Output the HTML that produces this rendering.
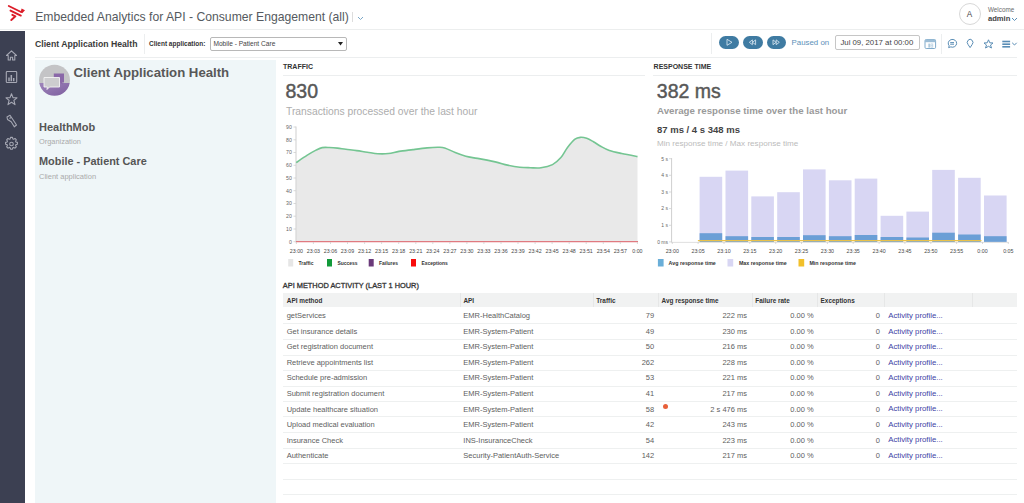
<!DOCTYPE html>
<html><head><meta charset="utf-8">
<style>
*{margin:0;padding:0;box-sizing:border-box}
html,body{width:1024px;height:503px;overflow:hidden;background:#fff;font-family:"Liberation Sans",sans-serif;color:#333}
.a{position:absolute;white-space:nowrap}
#hdr{position:absolute;left:0;top:0;width:1024px;height:30px;border-bottom:1px solid #eceeee}
#side{position:absolute;left:0;top:30.5px;width:24.8px;height:473px;background:#3c4052}
#tb{position:absolute;left:25px;top:31px;width:999px;height:27px}
.hl{position:absolute;height:1px;background:#eceeef}
.vl{position:absolute;width:1px;background:#eceeef}
#lp{position:absolute;left:35px;top:60px;width:241px;height:443px;background:#eff6f8}
.btn{position:absolute;top:36px;width:19.5px;height:12.7px;border-radius:7px;background:#3f7ba2}
.th{position:absolute;top:293px;height:14px;background:#f1f2f2}
.row{position:absolute;left:283px;width:734px;height:1px;background:#eef0f0}
.tm{font-size:7.5px;color:#5e5e5e}
.hd{font-size:6.4px;font-weight:700;color:#333}
</style></head><body>
<!-- header -->
<div id="hdr"></div>
<svg class="a" style="left:4px;top:2px" width="24" height="22" viewBox="4 2 24 22">
  <g stroke="#dc1c28" stroke-width="1.9" fill="none" stroke-linecap="round" stroke-linejoin="round">
    <path d="M8.8 6 L21 12"/>
    <path d="M10.5 10.6 L20.8 15.6"/>
    <path d="M12.3 14.8 L15.4 16.3 L11.3 20"/>
  </g>
  <path d="M21.6 8.4 L25 10.3 L22.2 13.2 L20.6 12 Z" fill="#dc1c28"/>
</svg>
<div class="a" style="left:35.2px;top:10px;font-size:12.2px;color:#555a60">Embedded Analytics for API - Consumer Engagement (all)</div>
<div class="vl" style="left:352px;top:12.3px;height:9.8px;background:#ddd"></div>
<svg class="a" style="left:357px;top:15.8px" width="7" height="5" viewBox="0 0 7 5"><path d="M1 1 L3.5 3.5 L6 1" stroke="#7aa6c6" stroke-width="1" fill="none"/></svg>
<div class="a" style="left:958.5px;top:3.3px;width:22px;height:22px;border:1px solid #d8d8d8;border-radius:50%"></div>
<div class="a" style="left:965px;top:10px;font-size:8.2px;color:#444;width:9px;text-align:center">A</div>
<div class="a" style="left:988px;top:5.8px;font-size:6.3px;color:#6a6a6a">Welcome</div>
<div class="a" style="left:988px;top:14px;font-size:7.6px;font-weight:700;color:#444">admin</div>
<svg class="a" style="left:1011px;top:16.5px" width="7" height="5" viewBox="0 0 7 5"><path d="M1 1 L3.5 3.5 L6 1" stroke="#5b8fb8" stroke-width="1" fill="none"/></svg>

<!-- sidebar -->
<div id="side"></div>
<svg class="a" style="left:0;top:30px" width="25" height="130" viewBox="0 30 25 130">
  <g stroke="#a6a8b4" stroke-width="1.1" fill="none" stroke-linejoin="round">
    <!-- home -->
    <path d="M6.5 55.5 L11.5 50.8 L16.5 55.5 L14.8 55.5 L14.8 60 L12.6 60 L12.6 57.3 L10.4 57.3 L10.4 60 L8.2 60 L8.2 55.5 Z"/>
    <!-- chart -->
    <rect x="6.3" y="71.5" width="10.4" height="11" rx="0.8"/>
    <path d="M9 81.2 V77.5 M11.3 81.2 V75 M13.7 81.2 V78" stroke-width="1.5"/>
    <!-- star -->
    <path d="M11.5 93.8 L13 97.6 L17 97.8 L13.9 100.4 L15 104.6 L11.5 102.3 L8 104.6 L9.1 100.4 L6 97.8 L10 97.6 Z"/>
    <!-- flashlight -->
    <path d="M7 117 L10 115.2 L13.2 120 L16.5 125 L14.3 126.8 L11.2 121.8 L7.5 119.5 Z"/>
    <path d="M9.5 118.5 L11 117.5"/>
    <!-- gear -->
    <circle cx="11.5" cy="144" r="1.8"/>
    <path d="M15.90 141.95 L17.43 142.36 L17.43 144.24 L15.90 144.65 L15.57 145.45 L16.35 146.83 L15.03 148.15 L13.65 147.37 L12.85 147.70 L12.44 149.23 L10.56 149.23 L10.15 147.70 L9.35 147.37 L7.97 148.15 L6.65 146.83 L7.43 145.45 L7.10 144.65 L5.57 144.24 L5.57 142.36 L7.10 141.95 L7.43 141.15 L6.65 139.77 L7.97 138.45 L9.35 139.23 L10.15 138.90 L10.56 137.37 L12.44 137.37 L12.85 138.90 L13.65 139.23 L15.03 138.45 L16.35 139.77 L15.57 141.15 Z"/>
  </g>
</svg>

<!-- toolbar -->
<div class="a" style="left:35px;top:39px;font-size:8.7px;font-weight:700;color:#3a3a3a">Client Application Health</div>
<div class="vl" style="left:144px;top:34px;height:20px"></div>
<div class="a" style="left:149px;top:40.3px;font-size:6.5px;font-weight:700;color:#333">Client application:</div>
<div class="a" style="left:209.5px;top:37.2px;width:137px;height:13.8px;border:1px solid #b8b8b8;border-radius:2px;background:#fff"></div>
<div class="a" style="left:213.4px;top:40.2px;font-size:6.6px;color:#444">Mobile - Patient Care</div>
<svg class="a" style="left:338px;top:42px" width="5" height="4" viewBox="0 0 5 4"><path d="M0 0 H5 L2.5 3.5 Z" fill="#222"/></svg>

<div class="vl" style="left:711px;top:33px;height:21px"></div>
<div class="btn" style="left:719px"></div>
<div class="btn" style="left:743px"></div>
<div class="btn" style="left:766.5px"></div>
<svg class="a" style="left:719px;top:36px" width="68" height="13" viewBox="719 36 68 13">
  <g stroke="#cfe0ec" stroke-width="0.9" fill="none" stroke-linejoin="round">
    <path d="M727 39.3 L732 42.3 L727 45.3 Z"/>
    <path d="M752.4 39.9 L749.3 42.3 L752.4 44.7 Z M755.6 39.9 L752.5 42.3 L755.6 44.7 Z"/>
    <path d="M773 39.9 L776.1 42.3 L773 44.7 Z M776.2 39.9 L779.3 42.3 L776.2 44.7 Z"/>
  </g>
</svg>
<div class="a" style="left:791.5px;top:37.8px;font-size:7.9px;color:#5d91b9">Paused on</div>
<div class="a" style="left:835.3px;top:35.2px;width:84.6px;height:14.4px;border:1px solid #c6c6c6;border-radius:2px"></div>
<div class="a" style="left:840.4px;top:38px;font-size:7.8px;color:#444">Jul 09, 2017 at 00:00</div>
<svg class="a" style="left:923px;top:37px" width="15" height="14" viewBox="923 37 15 14">
  <rect x="925" y="39.6" width="10.6" height="8.9" rx="1.2" fill="none" stroke="#80abcb" stroke-width="1"/>
  <rect x="925" y="39.6" width="10.6" height="2.6" fill="#9cbdd6"/>
  <path d="M929.1 43.6 V47.6" stroke="#7ba6c7" stroke-width="1"/>
  <path d="M930.9 43.8 V47.4 M932.7 43.8 V47.4" stroke="#a9c6dc" stroke-width="0.7"/>
  <path d="M930.9 43.8 H932.7 M930.9 45.6 H932.7 M930.9 47.4 H932.7" stroke="#a9c6dc" stroke-width="0.5"/>
</svg>
<div class="vl" style="left:940.6px;top:34px;height:20px"></div>
<svg class="a" style="left:945px;top:37px" width="76" height="13" viewBox="945 37 76 13">
  <g stroke="#5a8db5" stroke-width="1" fill="none" stroke-linejoin="round">
    <path d="M948.6 47.6 L949.2 45.8 A4.2 3.9 0 1 1 950.8 46.9 Z"/>
    <path d="M950.2 42.6 H954 M950.2 44.2 H954"/>
    <path d="M970.1 47.6 L968.1 44.6 A2.8 3.1 0 1 1 972.1 44.6 Z"/>
    <path d="M988.5 39.8 L989.8 42.8 L993 43 L990.5 45 L991.5 48 L988.5 46.3 L985.5 48 L986.5 45 L984 43 L987.2 42.8 Z"/>
    <path d="M1012.2 42.8 L1014.5 45 L1016.7 42.8"/>
  </g>
  <g fill="#5a8db5">
    <rect x="1002.3" y="40.7" width="7.8" height="1.6"/>
    <rect x="1002.3" y="43.4" width="7.8" height="1.6"/>
    <rect x="1002.3" y="46" width="7.8" height="1.6"/>
  </g>
</svg>
<div class="hl" style="left:35px;top:56.5px;width:982px"></div>

<!-- left panel -->
<div id="lp"></div>
<svg class="a" style="left:38px;top:64px" width="34" height="33" viewBox="38 64 34 33">
  <defs>
    <clipPath id="cc"><circle cx="54.5" cy="80.3" r="15.5"/></clipPath>
    <linearGradient id="pg" x1="0" y1="0" x2="1" y2="1"><stop offset="0" stop-color="#9f86bb"/><stop offset="1" stop-color="#7a5a9c"/></linearGradient>
  </defs>
  <g clip-path="url(#cc)">
    <rect x="38" y="64" width="34" height="19" fill="#c4c4c6"/>
    <rect x="38" y="83" width="34" height="14" fill="url(#pg)"/>
  </g>
  <path d="M53.8 73.6 H64 V82.5 L62.3 82.5 L62.8 84.8 L59.8 82.5 H53.8 Z" fill="#8a68a8"/>
  <path d="M44 77.5 H59.5 V87 H49.5 L47 89.5 L47.3 87 H44 Z" fill="#cdcdcf" stroke="#f4f4f4" stroke-width="0.9"/>
</svg>
<div class="a" style="left:73.6px;top:64.5px;font-size:13.2px;font-weight:700;color:#585858">Client Application Health</div>
<div class="a" style="left:39px;top:121px;font-size:11px;font-weight:700;color:#555">HealthMob</div>
<div class="a" style="left:39px;top:136.7px;font-size:7.4px;color:#aaa">Organization</div>
<div class="a" style="left:39px;top:155.4px;font-size:10.9px;font-weight:700;color:#555">Mobile - Patient Care</div>
<div class="a" style="left:39px;top:171.8px;font-size:7.5px;color:#aaa">Client application</div>

<!-- traffic -->
<div class="a" style="left:283px;top:63.4px;font-size:7px;font-weight:700;color:#333">TRAFFIC</div>
<div class="hl" style="left:283px;top:74.5px;width:362px"></div>
<div class="a" style="left:285.5px;top:80px;font-size:19.5px;color:#585858;-webkit-text-stroke:0.45px #585858">830</div>
<div class="a" style="left:286px;top:105.5px;font-size:10.3px;color:#adadad">Transactions processed over the last hour</div>
<!--TCHART--><svg class="a" style="left:275px;top:115px" width="375" height="160" viewBox="275 115 375 160">
<path d="M296.2 162.6 C298.0 161.4 303.6 157.5 306.9 155.4 C310.2 153.3 313.4 151.4 316.0 150.1 C318.6 148.8 320.0 148.0 322.2 147.6 C324.4 147.2 326.6 147.4 329.2 147.5 C331.8 147.6 334.7 147.8 337.5 148.1 C340.3 148.4 342.7 148.9 345.9 149.3 C349.1 149.7 353.2 150.1 356.8 150.6 C360.4 151.1 363.8 151.7 367.3 152.2 C370.8 152.7 374.4 153.5 377.9 153.7 C381.4 153.9 384.9 153.9 388.4 153.5 C391.9 153.1 394.9 152.1 399.0 151.4 C403.1 150.8 408.3 150.2 413.0 149.6 C417.7 149.0 423.0 148.3 427.1 147.9 C431.2 147.5 434.8 147.3 437.7 147.3 C440.6 147.3 441.8 147.0 444.7 147.9 C447.6 148.8 451.7 151.2 455.2 152.6 C458.7 154.0 462.1 155.3 465.8 156.3 C469.5 157.3 472.7 157.5 477.6 158.4 C482.5 159.3 490.2 160.8 495.2 161.9 C500.2 163.0 503.4 164.2 507.5 165.1 C511.6 166.0 516.0 166.8 519.8 167.2 C523.6 167.6 526.8 167.6 530.3 167.7 C533.8 167.8 537.2 168.3 540.9 167.8 C544.6 167.3 549.2 166.3 552.5 164.6 C555.8 162.9 558.4 160.3 560.9 157.5 C563.4 154.7 565.1 150.6 567.5 147.5 C569.9 144.4 572.8 140.9 575.0 139.2 C577.2 137.5 578.9 137.5 580.9 137.3 C582.9 137.2 584.6 137.6 586.7 138.3 C588.8 139.0 591.1 140.4 593.4 141.7 C595.7 143.0 597.9 144.7 600.6 146.2 C603.3 147.7 605.9 149.3 609.4 150.5 C612.9 151.7 617.0 152.5 621.7 153.5 C626.4 154.5 634.9 156.1 637.5 156.6 L637.5 241.7 L296.2 241.7 Z" fill="#e9e9e9"/>
<path d="M296 126.5 V242.5" stroke="#cfcfcf" stroke-width="1"/>
<path d="M293.5 241.7 H296" stroke="#cfcfcf" stroke-width="0.8"/>
<text x="291.8" y="243.5" font-size="5.2" fill="#666" text-anchor="end">0</text>
<path d="M293.5 229.0 H296" stroke="#cfcfcf" stroke-width="0.8"/>
<text x="291.8" y="230.8" font-size="5.2" fill="#666" text-anchor="end">10</text>
<path d="M293.5 216.2 H296" stroke="#cfcfcf" stroke-width="0.8"/>
<text x="291.8" y="218.0" font-size="5.2" fill="#666" text-anchor="end">20</text>
<path d="M293.5 203.5 H296" stroke="#cfcfcf" stroke-width="0.8"/>
<text x="291.8" y="205.3" font-size="5.2" fill="#666" text-anchor="end">30</text>
<path d="M293.5 190.7 H296" stroke="#cfcfcf" stroke-width="0.8"/>
<text x="291.8" y="192.5" font-size="5.2" fill="#666" text-anchor="end">40</text>
<path d="M293.5 178.0 H296" stroke="#cfcfcf" stroke-width="0.8"/>
<text x="291.8" y="179.8" font-size="5.2" fill="#666" text-anchor="end">50</text>
<path d="M293.5 165.3 H296" stroke="#cfcfcf" stroke-width="0.8"/>
<text x="291.8" y="167.1" font-size="5.2" fill="#666" text-anchor="end">60</text>
<path d="M293.5 152.5 H296" stroke="#cfcfcf" stroke-width="0.8"/>
<text x="291.8" y="154.3" font-size="5.2" fill="#666" text-anchor="end">70</text>
<path d="M293.5 139.8 H296" stroke="#cfcfcf" stroke-width="0.8"/>
<text x="291.8" y="141.6" font-size="5.2" fill="#666" text-anchor="end">80</text>
<path d="M293.5 127.0 H296" stroke="#cfcfcf" stroke-width="0.8"/>
<text x="291.8" y="128.8" font-size="5.2" fill="#666" text-anchor="end">90</text>
<path d="M296 241.6 H638" stroke="#e07a80" stroke-width="1.3"/>
<path d="M296.2 162.6 C298.0 161.4 303.6 157.5 306.9 155.4 C310.2 153.3 313.4 151.4 316.0 150.1 C318.6 148.8 320.0 148.0 322.2 147.6 C324.4 147.2 326.6 147.4 329.2 147.5 C331.8 147.6 334.7 147.8 337.5 148.1 C340.3 148.4 342.7 148.9 345.9 149.3 C349.1 149.7 353.2 150.1 356.8 150.6 C360.4 151.1 363.8 151.7 367.3 152.2 C370.8 152.7 374.4 153.5 377.9 153.7 C381.4 153.9 384.9 153.9 388.4 153.5 C391.9 153.1 394.9 152.1 399.0 151.4 C403.1 150.8 408.3 150.2 413.0 149.6 C417.7 149.0 423.0 148.3 427.1 147.9 C431.2 147.5 434.8 147.3 437.7 147.3 C440.6 147.3 441.8 147.0 444.7 147.9 C447.6 148.8 451.7 151.2 455.2 152.6 C458.7 154.0 462.1 155.3 465.8 156.3 C469.5 157.3 472.7 157.5 477.6 158.4 C482.5 159.3 490.2 160.8 495.2 161.9 C500.2 163.0 503.4 164.2 507.5 165.1 C511.6 166.0 516.0 166.8 519.8 167.2 C523.6 167.6 526.8 167.6 530.3 167.7 C533.8 167.8 537.2 168.3 540.9 167.8 C544.6 167.3 549.2 166.3 552.5 164.6 C555.8 162.9 558.4 160.3 560.9 157.5 C563.4 154.7 565.1 150.6 567.5 147.5 C569.9 144.4 572.8 140.9 575.0 139.2 C577.2 137.5 578.9 137.5 580.9 137.3 C582.9 137.2 584.6 137.6 586.7 138.3 C588.8 139.0 591.1 140.4 593.4 141.7 C595.7 143.0 597.9 144.7 600.6 146.2 C603.3 147.7 605.9 149.3 609.4 150.5 C612.9 151.7 617.0 152.5 621.7 153.5 C626.4 154.5 634.9 156.1 637.5 156.6" fill="none" stroke="#74c592" stroke-width="1.6"/>
<path d="M296.4 242 V244" stroke="#cfcfcf" stroke-width="0.8"/>
<text x="296.4" y="253.4" font-size="5.3" fill="#484848" text-anchor="middle">23:00</text>
<path d="M313.4 242 V244" stroke="#cfcfcf" stroke-width="0.8"/>
<text x="313.4" y="253.4" font-size="5.3" fill="#484848" text-anchor="middle">23:03</text>
<path d="M330.5 242 V244" stroke="#cfcfcf" stroke-width="0.8"/>
<text x="330.5" y="253.4" font-size="5.3" fill="#484848" text-anchor="middle">23:06</text>
<path d="M347.5 242 V244" stroke="#cfcfcf" stroke-width="0.8"/>
<text x="347.5" y="253.4" font-size="5.3" fill="#484848" text-anchor="middle">23:09</text>
<path d="M364.6 242 V244" stroke="#cfcfcf" stroke-width="0.8"/>
<text x="364.6" y="253.4" font-size="5.3" fill="#484848" text-anchor="middle">23:12</text>
<path d="M381.6 242 V244" stroke="#cfcfcf" stroke-width="0.8"/>
<text x="381.6" y="253.4" font-size="5.3" fill="#484848" text-anchor="middle">23:15</text>
<path d="M398.7 242 V244" stroke="#cfcfcf" stroke-width="0.8"/>
<text x="398.7" y="253.4" font-size="5.3" fill="#484848" text-anchor="middle">23:18</text>
<path d="M415.8 242 V244" stroke="#cfcfcf" stroke-width="0.8"/>
<text x="415.8" y="253.4" font-size="5.3" fill="#484848" text-anchor="middle">23:21</text>
<path d="M432.8 242 V244" stroke="#cfcfcf" stroke-width="0.8"/>
<text x="432.8" y="253.4" font-size="5.3" fill="#484848" text-anchor="middle">23:24</text>
<path d="M449.9 242 V244" stroke="#cfcfcf" stroke-width="0.8"/>
<text x="449.9" y="253.4" font-size="5.3" fill="#484848" text-anchor="middle">23:27</text>
<path d="M466.9 242 V244" stroke="#cfcfcf" stroke-width="0.8"/>
<text x="466.9" y="253.4" font-size="5.3" fill="#484848" text-anchor="middle">23:30</text>
<path d="M483.9 242 V244" stroke="#cfcfcf" stroke-width="0.8"/>
<text x="483.9" y="253.4" font-size="5.3" fill="#484848" text-anchor="middle">23:33</text>
<path d="M501.0 242 V244" stroke="#cfcfcf" stroke-width="0.8"/>
<text x="501.0" y="253.4" font-size="5.3" fill="#484848" text-anchor="middle">23:36</text>
<path d="M518.0 242 V244" stroke="#cfcfcf" stroke-width="0.8"/>
<text x="518.0" y="253.4" font-size="5.3" fill="#484848" text-anchor="middle">23:39</text>
<path d="M535.1 242 V244" stroke="#cfcfcf" stroke-width="0.8"/>
<text x="535.1" y="253.4" font-size="5.3" fill="#484848" text-anchor="middle">23:42</text>
<path d="M552.1 242 V244" stroke="#cfcfcf" stroke-width="0.8"/>
<text x="552.1" y="253.4" font-size="5.3" fill="#484848" text-anchor="middle">23:45</text>
<path d="M569.2 242 V244" stroke="#cfcfcf" stroke-width="0.8"/>
<text x="569.2" y="253.4" font-size="5.3" fill="#484848" text-anchor="middle">23:48</text>
<path d="M586.2 242 V244" stroke="#cfcfcf" stroke-width="0.8"/>
<text x="586.2" y="253.4" font-size="5.3" fill="#484848" text-anchor="middle">23:51</text>
<path d="M603.3 242 V244" stroke="#cfcfcf" stroke-width="0.8"/>
<text x="603.3" y="253.4" font-size="5.3" fill="#484848" text-anchor="middle">23:54</text>
<path d="M620.3 242 V244" stroke="#cfcfcf" stroke-width="0.8"/>
<text x="620.3" y="253.4" font-size="5.3" fill="#484848" text-anchor="middle">23:57</text>
<path d="M637.4 242 V244" stroke="#cfcfcf" stroke-width="0.8"/>
<text x="637.4" y="253.4" font-size="5.3" fill="#484848" text-anchor="middle">0:00</text>
<rect x="288.2" y="259" width="5" height="7.5" fill="#e6e6e6"/>
<text x="298.6" y="264.6" font-size="4.95" font-weight="700" fill="#333">Traffic</text>
<rect x="327" y="259" width="5" height="7.5" fill="#129a3a"/>
<text x="337.4" y="264.6" font-size="4.95" font-weight="700" fill="#333">Success</text>
<rect x="368.7" y="259" width="5" height="7.5" fill="#6a3a7a"/>
<text x="379" y="264.6" font-size="4.95" font-weight="700" fill="#333">Failures</text>
<rect x="411" y="259" width="5" height="7.5" fill="#f80c0c"/>
<text x="421.5" y="264.6" font-size="4.95" font-weight="700" fill="#333">Exceptions</text>
</svg><!--/TCHART-->

<!-- response -->
<div class="a" style="left:653.6px;top:63.4px;font-size:7px;font-weight:700;color:#333">RESPONSE TIME</div>
<div class="hl" style="left:653px;top:74.5px;width:364px"></div>
<div class="a" style="left:656.8px;top:79.5px;font-size:19.5px;color:#585858;-webkit-text-stroke:0.45px #585858">382 ms</div>
<div class="a" style="left:657px;top:105px;font-size:9.7px;font-weight:700;color:#9a9a9a">Average response time over the last hour</div>
<div class="a" style="left:657px;top:123.5px;font-size:9.5px;font-weight:700;color:#444">87 ms / 4 s 348 ms</div>
<div class="a" style="left:657px;top:138.8px;font-size:8.1px;color:#bbb">Min response time / Max response time</div>
<!--RCHART--><svg class="a" style="left:645px;top:150px" width="379" height="125" viewBox="645 150 379 125">
<path d="M671.6 158 V242.5" stroke="#cfcfcf" stroke-width="1"/>
<path d="M669 241.9 H671.6" stroke="#cfcfcf" stroke-width="0.8"/>
<text x="668" y="243.7" font-size="5" fill="#666" text-anchor="end">0 ms</text>
<path d="M669 225.3 H671.6" stroke="#cfcfcf" stroke-width="0.8"/>
<text x="668" y="227.1" font-size="5" fill="#666" text-anchor="end">1 s</text>
<path d="M669 208.6 H671.6" stroke="#cfcfcf" stroke-width="0.8"/>
<text x="668" y="210.4" font-size="5" fill="#666" text-anchor="end">2 s</text>
<path d="M669 192.0 H671.6" stroke="#cfcfcf" stroke-width="0.8"/>
<text x="668" y="193.8" font-size="5" fill="#666" text-anchor="end">3 s</text>
<path d="M669 175.3 H671.6" stroke="#cfcfcf" stroke-width="0.8"/>
<text x="668" y="177.1" font-size="5" fill="#666" text-anchor="end">4 s</text>
<path d="M669 158.7 H671.6" stroke="#cfcfcf" stroke-width="0.8"/>
<text x="668" y="160.5" font-size="5" fill="#666" text-anchor="end">5 s</text>
<rect x="699.6" y="176.8" width="22.6" height="65.1" fill="#d8d6f3"/>
<rect x="699.6" y="233.2" width="22.6" height="8.7" fill="#6b9fd6"/>
<rect x="725.5" y="170.6" width="22.6" height="71.3" fill="#d8d6f3"/>
<rect x="725.5" y="236.2" width="22.6" height="5.7" fill="#6b9fd6"/>
<rect x="751.3" y="196.4" width="22.6" height="45.5" fill="#d8d6f3"/>
<rect x="751.3" y="237" width="22.6" height="4.9" fill="#6b9fd6"/>
<rect x="777.2" y="192.2" width="22.6" height="49.7" fill="#d8d6f3"/>
<rect x="777.2" y="237" width="22.6" height="4.9" fill="#6b9fd6"/>
<rect x="803.0" y="169.4" width="22.6" height="72.5" fill="#d8d6f3"/>
<rect x="803.0" y="235.2" width="22.6" height="6.7" fill="#6b9fd6"/>
<rect x="828.9" y="180.3" width="22.6" height="61.6" fill="#d8d6f3"/>
<rect x="828.9" y="236.2" width="22.6" height="5.7" fill="#6b9fd6"/>
<rect x="854.7" y="178.6" width="22.6" height="63.3" fill="#d8d6f3"/>
<rect x="854.7" y="235" width="22.6" height="6.9" fill="#6b9fd6"/>
<rect x="880.6" y="215.8" width="22.6" height="26.1" fill="#d8d6f3"/>
<rect x="880.6" y="237" width="22.6" height="4.9" fill="#6b9fd6"/>
<rect x="906.4" y="211.6" width="22.6" height="30.3" fill="#d8d6f3"/>
<rect x="906.4" y="237.5" width="22.6" height="4.4" fill="#6b9fd6"/>
<rect x="932.2" y="169.9" width="22.6" height="72.0" fill="#d8d6f3"/>
<rect x="932.2" y="232.7" width="22.6" height="9.2" fill="#6b9fd6"/>
<rect x="958.1" y="177.8" width="22.6" height="64.1" fill="#d8d6f3"/>
<rect x="958.1" y="234.5" width="22.6" height="7.4" fill="#6b9fd6"/>
<rect x="984.0" y="195.5" width="22.6" height="46.4" fill="#d8d6f3"/>
<rect x="984.0" y="236.2" width="22.6" height="5.7" fill="#6b9fd6"/>
<path d="M671.6 242.4 H1008.4" stroke="#d8d8d8" stroke-width="0.8"/>
<path d="M697.9 240.7 H981.5" stroke="#e9c24a" stroke-width="1.2"/>
<path d="M672.3 242 V244" stroke="#cfcfcf" stroke-width="0.8"/>
<text x="672.3" y="253.2" font-size="5.3" fill="#484848" text-anchor="middle">23:00</text>
<path d="M698.1 242 V244" stroke="#cfcfcf" stroke-width="0.8"/>
<text x="698.1" y="253.2" font-size="5.3" fill="#484848" text-anchor="middle">23:05</text>
<path d="M724.0 242 V244" stroke="#cfcfcf" stroke-width="0.8"/>
<text x="724.0" y="253.2" font-size="5.3" fill="#484848" text-anchor="middle">23:10</text>
<path d="M749.8 242 V244" stroke="#cfcfcf" stroke-width="0.8"/>
<text x="749.8" y="253.2" font-size="5.3" fill="#484848" text-anchor="middle">23:15</text>
<path d="M775.7 242 V244" stroke="#cfcfcf" stroke-width="0.8"/>
<text x="775.7" y="253.2" font-size="5.3" fill="#484848" text-anchor="middle">23:20</text>
<path d="M801.5 242 V244" stroke="#cfcfcf" stroke-width="0.8"/>
<text x="801.5" y="253.2" font-size="5.3" fill="#484848" text-anchor="middle">23:25</text>
<path d="M827.4 242 V244" stroke="#cfcfcf" stroke-width="0.8"/>
<text x="827.4" y="253.2" font-size="5.3" fill="#484848" text-anchor="middle">23:30</text>
<path d="M853.2 242 V244" stroke="#cfcfcf" stroke-width="0.8"/>
<text x="853.2" y="253.2" font-size="5.3" fill="#484848" text-anchor="middle">23:35</text>
<path d="M879.1 242 V244" stroke="#cfcfcf" stroke-width="0.8"/>
<text x="879.1" y="253.2" font-size="5.3" fill="#484848" text-anchor="middle">23:40</text>
<path d="M904.9 242 V244" stroke="#cfcfcf" stroke-width="0.8"/>
<text x="904.9" y="253.2" font-size="5.3" fill="#484848" text-anchor="middle">23:45</text>
<path d="M930.8 242 V244" stroke="#cfcfcf" stroke-width="0.8"/>
<text x="930.8" y="253.2" font-size="5.3" fill="#484848" text-anchor="middle">23:50</text>
<path d="M956.6 242 V244" stroke="#cfcfcf" stroke-width="0.8"/>
<text x="956.6" y="253.2" font-size="5.3" fill="#484848" text-anchor="middle">23:55</text>
<path d="M982.5 242 V244" stroke="#cfcfcf" stroke-width="0.8"/>
<text x="982.5" y="253.2" font-size="5.3" fill="#484848" text-anchor="middle">0:00</text>
<path d="M1008.3 242 V244" stroke="#cfcfcf" stroke-width="0.8"/>
<text x="1008.3" y="253.2" font-size="5.3" fill="#484848" text-anchor="middle">0:05</text>
<rect x="657.9" y="259" width="5.7" height="7.5" fill="#6aaed8"/>
<text x="668.6" y="264.8" font-size="5.3" font-weight="700" fill="#333">Avg response time</text>
<rect x="727.5" y="259" width="5.7" height="7.5" fill="#d8d6f3"/>
<text x="738.9" y="264.8" font-size="5.3" font-weight="700" fill="#333">Max response time</text>
<rect x="798.5" y="259" width="5.7" height="7.5" fill="#f2c02a"/>
<text x="809.4" y="264.8" font-size="5.3" font-weight="700" fill="#333">Min response time</text>
</svg><!--/RCHART-->

<!-- table -->
<div class="a" style="left:282.8px;top:280.9px;font-size:7.4px;font-weight:400;color:#333;-webkit-text-stroke:0.3px #333">API METHOD ACTIVITY (LAST 1 HOUR)</div>
<!--TBL--><div class="th" style="left:283px;width:734px"></div>
<div class="vl" style="left:459.6px;top:293px;height:14px;background:#e6e7e7"></div>
<div class="vl" style="left:592.5px;top:293px;height:14px;background:#e6e7e7"></div>
<div class="vl" style="left:657.8px;top:293px;height:14px;background:#e6e7e7"></div>
<div class="vl" style="left:751.5px;top:293px;height:14px;background:#e6e7e7"></div>
<div class="vl" style="left:816.8px;top:293px;height:14px;background:#e6e7e7"></div>
<div class="vl" style="left:883.8px;top:293px;height:14px;background:#e6e7e7"></div>
<div class="vl" style="left:972.4px;top:293px;height:14px;background:#e6e7e7"></div>
<div class="a hd" style="left:286.8px;top:297px">API method</div>
<div class="a hd" style="left:463.4px;top:297px">API</div>
<div class="a hd" style="left:596.3px;top:297px">Traffic</div>
<div class="a hd" style="left:661.6px;top:297px">Avg response time</div>
<div class="a hd" style="left:755.3px;top:297px">Failure rate</div>
<div class="a hd" style="left:820.6px;top:297px">Exceptions</div>
<div class="a tm" style="left:286.7px;top:311.3px">getServices</div>
<div class="a tm" style="left:463.3px;top:311.3px">EMR-HealthCatalog</div>
<div class="a tm" style="right:369.8px;top:311.3px">79</div>
<div class="a tm" style="right:277.0px;top:311.3px">222 ms</div>
<div class="a tm" style="right:210.4px;top:311.3px">0.00 %</div>
<div class="a tm" style="right:144.2px;top:311.3px">0</div>
<div class="a tm" style="left:888.2px;top:311.1px;color:#4043a6;font-size:7.8px">Activity profile...</div>
<div class="a tm" style="left:286.7px;top:326.8px">Get insurance details</div>
<div class="a tm" style="left:463.3px;top:326.8px">EMR-System-Patient</div>
<div class="a tm" style="right:369.8px;top:326.8px">49</div>
<div class="a tm" style="right:277.0px;top:326.8px">230 ms</div>
<div class="a tm" style="right:210.4px;top:326.8px">0.00 %</div>
<div class="a tm" style="right:144.2px;top:326.8px">0</div>
<div class="a tm" style="left:888.2px;top:326.6px;color:#4043a6;font-size:7.8px">Activity profile...</div>
<div class="a tm" style="left:286.7px;top:342.4px">Get registration document</div>
<div class="a tm" style="left:463.3px;top:342.4px">EMR-System-Patient</div>
<div class="a tm" style="right:369.8px;top:342.4px">50</div>
<div class="a tm" style="right:277.0px;top:342.4px">216 ms</div>
<div class="a tm" style="right:210.4px;top:342.4px">0.00 %</div>
<div class="a tm" style="right:144.2px;top:342.4px">0</div>
<div class="a tm" style="left:888.2px;top:342.2px;color:#4043a6;font-size:7.8px">Activity profile...</div>
<div class="a tm" style="left:286.7px;top:357.9px">Retrieve appointments list</div>
<div class="a tm" style="left:463.3px;top:357.9px">EMR-System-Patient</div>
<div class="a tm" style="right:369.8px;top:357.9px">262</div>
<div class="a tm" style="right:277.0px;top:357.9px">228 ms</div>
<div class="a tm" style="right:210.4px;top:357.9px">0.00 %</div>
<div class="a tm" style="right:144.2px;top:357.9px">0</div>
<div class="a tm" style="left:888.2px;top:357.7px;color:#4043a6;font-size:7.8px">Activity profile...</div>
<div class="a tm" style="left:286.7px;top:373.4px">Schedule pre-admission</div>
<div class="a tm" style="left:463.3px;top:373.4px">EMR-System-Patient</div>
<div class="a tm" style="right:369.8px;top:373.4px">53</div>
<div class="a tm" style="right:277.0px;top:373.4px">221 ms</div>
<div class="a tm" style="right:210.4px;top:373.4px">0.00 %</div>
<div class="a tm" style="right:144.2px;top:373.4px">0</div>
<div class="a tm" style="left:888.2px;top:373.2px;color:#4043a6;font-size:7.8px">Activity profile...</div>
<div class="a tm" style="left:286.7px;top:388.9px">Submit registration document</div>
<div class="a tm" style="left:463.3px;top:388.9px">EMR-System-Patient</div>
<div class="a tm" style="right:369.8px;top:388.9px">41</div>
<div class="a tm" style="right:277.0px;top:388.9px">217 ms</div>
<div class="a tm" style="right:210.4px;top:388.9px">0.00 %</div>
<div class="a tm" style="right:144.2px;top:388.9px">0</div>
<div class="a tm" style="left:888.2px;top:388.7px;color:#4043a6;font-size:7.8px">Activity profile...</div>
<div class="a tm" style="left:286.7px;top:404.5px">Update healthcare situation</div>
<div class="a tm" style="left:463.3px;top:404.5px">EMR-System-Patient</div>
<div class="a tm" style="right:369.8px;top:404.5px">58</div>
<div class="a tm" style="right:277.0px;top:404.5px">2 s 476 ms</div>
<div class="a tm" style="right:210.4px;top:404.5px">0.00 %</div>
<div class="a tm" style="right:144.2px;top:404.5px">0</div>
<div class="a tm" style="left:888.2px;top:404.3px;color:#4043a6;font-size:7.8px">Activity profile...</div>
<div class="a tm" style="left:286.7px;top:420.0px">Upload medical evaluation</div>
<div class="a tm" style="left:463.3px;top:420.0px">EMR-System-Patient</div>
<div class="a tm" style="right:369.8px;top:420.0px">42</div>
<div class="a tm" style="right:277.0px;top:420.0px">243 ms</div>
<div class="a tm" style="right:210.4px;top:420.0px">0.00 %</div>
<div class="a tm" style="right:144.2px;top:420.0px">0</div>
<div class="a tm" style="left:888.2px;top:419.8px;color:#4043a6;font-size:7.8px">Activity profile...</div>
<div class="a tm" style="left:286.7px;top:435.5px">Insurance Check</div>
<div class="a tm" style="left:463.3px;top:435.5px">INS-InsuranceCheck</div>
<div class="a tm" style="right:369.8px;top:435.5px">54</div>
<div class="a tm" style="right:277.0px;top:435.5px">223 ms</div>
<div class="a tm" style="right:210.4px;top:435.5px">0.00 %</div>
<div class="a tm" style="right:144.2px;top:435.5px">0</div>
<div class="a tm" style="left:888.2px;top:435.3px;color:#4043a6;font-size:7.8px">Activity profile...</div>
<div class="a tm" style="left:286.7px;top:451.1px">Authenticate</div>
<div class="a tm" style="left:463.3px;top:451.1px">Security-PatientAuth-Service</div>
<div class="a tm" style="right:369.8px;top:451.1px">142</div>
<div class="a tm" style="right:277.0px;top:451.1px">217 ms</div>
<div class="a tm" style="right:210.4px;top:451.1px">0.00 %</div>
<div class="a tm" style="right:144.2px;top:451.1px">0</div>
<div class="a tm" style="left:888.2px;top:450.9px;color:#4043a6;font-size:7.8px">Activity profile...</div>
<div class="row" style="top:322.5px"></div>
<div class="row" style="top:338.5px"></div>
<div class="row" style="top:354.5px"></div>
<div class="row" style="top:369.5px"></div>
<div class="row" style="top:385.5px"></div>
<div class="row" style="top:400.5px"></div>
<div class="row" style="top:416.0px"></div>
<div class="row" style="top:432.0px"></div>
<div class="row" style="top:447.5px"></div>
<div class="row" style="top:463.0px"></div>
<div class="row" style="top:478.5px"></div>
<div class="row" style="top:494.0px"></div>
<div class="a" style="left:663px;top:403.5px;width:5px;height:5px;border-radius:50%;background:#e8603a"></div><!--/TBL-->
</body></html>
